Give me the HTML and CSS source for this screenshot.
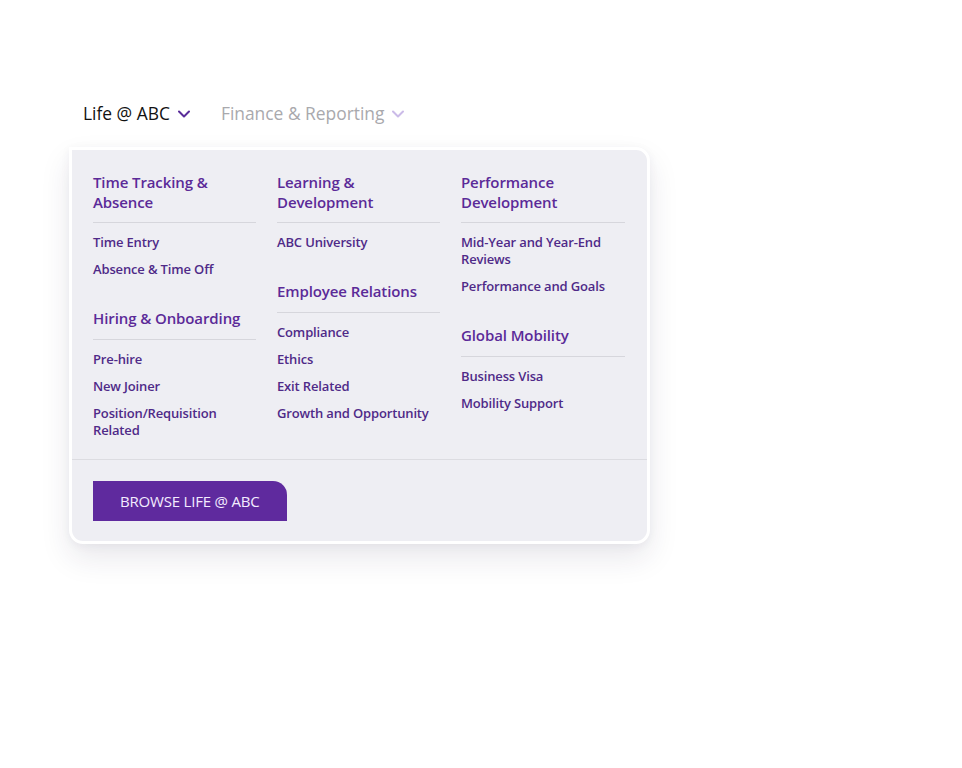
FILE: index.html
```html
<!DOCTYPE html>
<html lang="en">
<head>
<meta charset="utf-8">
<title>Life @ ABC</title>
<link rel="stylesheet" href="styles.css">
</head>
<body>
<nav class="nav">
  <a class="nav-item active">Life @ ABC
    <svg class="chev" width="12" height="8" viewBox="0 0 12 8"><path d="M1 1.5 L6 6.5 L11 1.5" fill="none" stroke="currentColor" stroke-width="2" stroke-linecap="round" stroke-linejoin="round"/></svg>
  </a>
  <a class="nav-item muted">Finance &amp; Reporting
    <svg class="chev" width="12" height="8" viewBox="0 0 12 8"><path d="M1 1.5 L6 6.5 L11 1.5" fill="none" stroke="currentColor" stroke-width="2" stroke-linecap="round" stroke-linejoin="round"/></svg>
  </a>
</nav>
<div class="menu">
  <div class="cols">
    <div class="col">
      <section class="group">
        <h3 class="heading">Time Tracking &amp; Absence</h3>
        <ul class="links"><li>Time Entry</li><li>Absence &amp; Time Off</li></ul>
      </section>
      <section class="group">
        <h3 class="heading">Hiring &amp; Onboarding</h3>
        <ul class="links"><li>Pre-hire</li><li>New Joiner</li><li>Position/Requisition Related</li></ul>
      </section>
    </div>
    <div class="col">
      <section class="group">
        <h3 class="heading">Learning &amp; Development</h3>
        <ul class="links"><li>ABC University</li></ul>
      </section>
      <section class="group">
        <h3 class="heading">Employee Relations</h3>
        <ul class="links"><li>Compliance</li><li>Ethics</li><li>Exit Related</li><li>Growth and Opportunity</li></ul>
      </section>
    </div>
    <div class="col">
      <section class="group">
        <h3 class="heading">Performance Development</h3>
        <ul class="links"><li>Mid-Year and Year-End Reviews</li><li>Performance and Goals</li></ul>
      </section>
      <section class="group">
        <h3 class="heading">Global Mobility</h3>
        <ul class="links"><li>Business Visa</li><li>Mobility Support</li></ul>
      </section>
    </div>
  </div>
  <div class="footer">
    <a class="browse">BROWSE LIFE @ ABC</a>
  </div>
</div>
</body>
</html>
```
FILE: styles.css
```css
* { box-sizing: border-box; }
html, body { margin: 0; padding: 0; background: #fff; }
body {
  font-family: "Open Sans", "Noto Sans", sans-serif;
  padding-top: 100px;
  min-height: 768px;
}
.nav {
  display: flex;
  gap: 31px;
  padding-left: 83px;
  height: 26px;
  align-items: center;
}
.nav-item {
  display: flex;
  align-items: center;
  gap: 8px;
  font-size: 17.4px;
  line-height: 26px;
  color: #111;
}
.nav-item .chev { color: #5a2d9a; margin-top: 1px; }
.nav-item.muted { color: #a9a9ad; }
.nav-item.muted .chev { color: #cbbbe8; }

.menu {
  margin-top: 21px;
  margin-left: 69px;
  width: 581px;
  background: #eeeef3;
  border: 3px solid #fff;
  border-radius: 0 14px 14px 14px;
  box-shadow: 0 14px 30px rgba(40, 30, 70, 0.10), 0 2px 10px rgba(40, 30, 70, 0.05);
}
.cols {
  display: grid;
  grid-template-columns: 163px 163px 164px;
  column-gap: 21px;
  padding: 23px 20px 20px 21px;
}
.col { display: flex; flex-direction: column; gap: 31px; }
.heading {
  margin: 0;
  font-size: 15px;
  line-height: 19.5px;
  font-weight: 600;
  letter-spacing: -0.1px;
  color: #5b2a98;
  padding-bottom: 10px;
  border-bottom: 1px solid #d6d6dc;
}
.links {
  list-style: none;
  margin: 11px 0 0;
  padding: 0;
  display: flex;
  flex-direction: column;
  gap: 10px;
}
.links li {
  font-size: 13px;
  line-height: 17px;
  font-weight: 600;
  letter-spacing: -0.15px;
  color: #4f2a88;
}
.footer {
  border-top: 1px solid #dcdce1;
  padding: 21px 21px 20px;
}
.browse {
  display: inline-flex;
  align-items: center;
  height: 40px;
  width: 194px;
  padding-left: 27px;
  background: #5f2a9e;
  color: #f3ecff;
  font-size: 15px;
  font-weight: 400;
  letter-spacing: -0.2px;
  border-radius: 0 14px 0 0;
}
```
